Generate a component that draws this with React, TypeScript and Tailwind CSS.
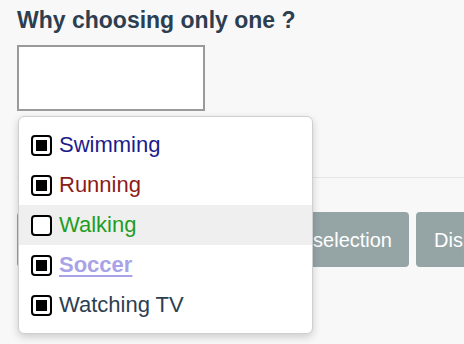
import { useState } from "react";

interface Option {
  label: string;
  color: string;
  checked: boolean;
  extra?: string;
}

const OPTIONS: Option[] = [
  { label: "Swimming", color: "text-[#1c1c8c]", checked: true },
  { label: "Running", color: "text-[#8e1b1b]", checked: true },
  { label: "Walking", color: "text-[#1f9e1f]", checked: false },
  { label: "Soccer", color: "text-[#a8a3e8]", checked: true, extra: "font-bold underline underline-offset-[3px]" },
  { label: "Watching TV", color: "text-[#2c3e50]", checked: true },
];

function Box({ checked }: { checked: boolean }) {
  return (
    <span className="w-[21px] h-[21px] shrink-0 rounded-[4px] border-[2.5px] border-black bg-white flex items-center justify-center">
      {checked && <span className="w-[11px] h-[11px] bg-black" />}
    </span>
  );
}

export default function App() {
  const [options, setOptions] = useState(OPTIONS);
  const hovered = 2;

  const toggle = (i: number) =>
    setOptions((prev) => prev.map((o, j) => (j === i ? { ...o, checked: !o.checked } : o)));

  return (
    <div className="relative w-[464px] h-[344px] overflow-hidden bg-[#f8f8f8] font-['Liberation_Sans',Arial,sans-serif]">
      <div className="pl-[17px] pt-[6px]">
        <h1 className="text-[23px] leading-[28px] font-bold text-[#2c3e50]">Why choosing only one ?</h1>
        <div className="mt-[11px] w-[188px] h-[66px] bg-white border-2 border-[#9a9a9a]" />

        {/* Actions */}
        <div className="mt-[66px] border-t border-[#e6e6e6] pt-[34px] flex gap-[7px] whitespace-nowrap">
          <button className="w-[392px] shrink-0 h-[55px] rounded-[4px] bg-[#95a5a6] text-white text-[20px] text-right pr-[17px]">
            Toggle the current selection
          </button>
          <button className="shrink-0 h-[55px] rounded-[4px] bg-[#95a5a6] text-white text-[20px] px-[18px]">
            Display
          </button>
        </div>
      </div>

      {/* Dropdown */}
      <div className="absolute left-[18px] top-[116px] w-[295px] py-[8px] bg-white rounded-[6px] border border-[#cfcfcf] shadow-[0_3px_8px_rgba(0,0,0,0.18)]">
        {options.map((o, i) => (
          <div
            key={o.label}
            onClick={() => toggle(i)}
            className={`h-[40px] flex items-center gap-[7px] pl-[12px] cursor-pointer ${i === hovered ? "bg-[#efefef]" : ""}`}
          >
            <Box checked={o.checked} />
            <span className={`text-[22px] leading-none ${o.color} ${o.extra ?? ""}`}>{o.label}</span>
          </div>
        ))}
      </div>
    </div>
  );
}
